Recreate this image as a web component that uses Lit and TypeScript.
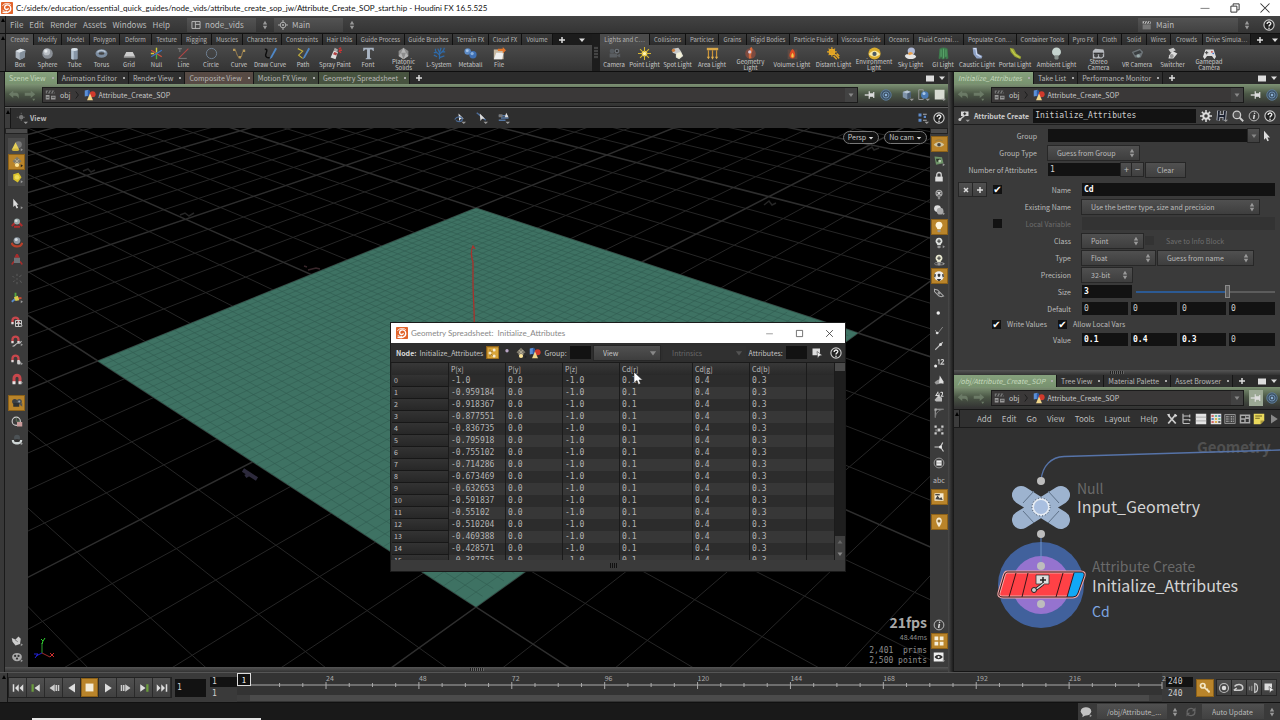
import { LitElement, html, svg, css, nothing } from "lit";
import { customElement } from "lit/decorators.js";
import { classMap } from "lit/directives/class-map.js";

/* ---------- icons (16 x 16 grid) ---------- */
const magnet = (x = 0, y = 0) => svg`<g transform="translate(${x} ${y})"><path d="M2 10V6a4 4 0 0 1 8 0v4" fill="none" stroke="#c8474c" stroke-width="3"/><path d="M.5 8h3v3h-3zM8.500 8h3v3h-3z" fill="#ddd"/></g>`;
const bulb = (fill: string) => svg`<path d="M8 1a4.500 4.500 0 0 1 3 8L10 11H6L5 9A4.500 4.500 0 0 1 8 1z" fill="${fill}"/><path d="M6 12h4v1.500l-1 1.500H7l-1-1.500z" fill="#999"/>`;
const corner = svg`<path d="M13 11l3 2-3 2z" fill="#999"/>`;
const drop = svg`<path d="M10 13h6l-3 3z" fill="#999"/>`;
const I: Record<string, unknown> = {
  swirl: svg`<rect width="16" height="16" rx="1" fill="#e2642b"/><path d="M2 13.500c5 1.500 11 0 11-5 0-3.500-3-5-5.500-4.500C4.500 4.500 4 8 6 9.500c1.500 1 4 .5 3.500-1.500" fill="none" stroke="#fff" stroke-width="1.800"/><path d="M2 5c2-3.500 8-4 11-1.500M2 10.500c1 1.500 3 2.500 6 2" fill="none" stroke="#fff" stroke-width="1.200"/>`,
  min: svg`<path d="M2 8.500h12" stroke="#555"/>`,
  restore: svg`<path d="M2.500 5.500h8v8h-8zM5.500 5V2.500h8v8H11" fill="none" stroke="#333" stroke-width="1.300"/>`,
  max: svg`<path d="M2.500 2.500h11v11h-11z" fill="none" stroke="#444" stroke-width="1.300"/>`,
  close: svg`<path d="M2 2l12 12M14 2L2 14" stroke="#333" stroke-width="1.400"/>`,
  layout: svg`<path d="M1.500 2.500h13v11h-13zM7 2.500v11M7 7h7.500" fill="none" stroke="#bbb" stroke-width="1.500"/>`,
  target: svg`<circle cx="8" cy="8" r="4.500" fill="none" stroke="#bbb" stroke-width="1.400"/><circle cx="8" cy="8" r="1.500" fill="#bbb"/><path d="M8 0v4M8 12v4M0 8h4M12 8h4" stroke="#bbb" stroke-width="1.400"/>`,
  clap: svg`<path d="M1 7h13v8H1z" fill="#777"/><path d="M1 2h13v4H1z" fill="#bbb"/><path d="M3 6l2-4M7 6l2-4M11 6l2-4" stroke="#333" stroke-width="1.500"/>`,
  ud: svg`<path d="M4.500 7L8 1l3.500 6zM4.500 9h7L8 15z" fill="#999"/>`,
  help: svg`<circle cx="8" cy="8" r="6.800" fill="#222" stroke="#ccc" stroke-width="1.500"/><path d="M5.500 6.500C5.500 3 10.700 3.300 10.400 6.300 10.200 8 8 7.800 8 10" fill="none" stroke="#eee" stroke-width="1.800"/><circle cx="8" cy="12.300" r="1.100" fill="#eee"/>`,
  info: svg`<circle cx="8" cy="8" r="6.500" fill="none" stroke="#bbb" stroke-width="1.300"/><path d="M8.500 6.500L7.500 12" stroke="#ddd" stroke-width="2"/><circle cx="8.800" cy="4.300" r="1.100" fill="#ddd"/>`,
  box: svg`<path d="M2 5l6-3 6 2-1 9-6 3-5-3z" fill="#aeb6bf"/><path d="M2 5l5 2 7-3-6-2z" fill="#dfe5ea"/><path d="M7 7l7-3-1 9-6 3z" fill="#84909c"/>`,
  sphere: svg`<circle cx="8" cy="8" r="6.500" fill="#8a8f96"/><circle cx="7" cy="6" r="4.200" fill="#b9bec4"/><circle cx="6" cy="5" r="2" fill="#e6e9ec"/>`,
  tube: svg`<path d="M4 3v11c0 2 8 2 8 0V3z" fill="#8795a5"/><path d="M4 3v11c0 1 2 1.300 3 1.300V3z" fill="#b5c3d1"/><ellipse cx="8" cy="3" rx="4" ry="1.800" fill="#d8e1e9"/>`,
  torus: svg`<ellipse cx="8" cy="8" rx="5.500" ry="3.400" fill="none" stroke="#7c8da0" stroke-width="3.800"/><path d="M3 6.500c2-3 8-3 10 0" fill="none" stroke="#b9c6d4" stroke-width="1.600"/>`,
  grid: svg`<path d="M4 6h8l3 6H1z" fill="#ccc"/><path d="M1 12h14v1.500H1z" fill="#888"/>`,
  nul: svg`<path d="M8 1v14" stroke="#4fae3c" stroke-width="1.600"/><path d="M1.500 4l13 8" stroke="#c9503b" stroke-width="1.600"/><path d="M14.500 4l-13 8" stroke="#3b75c4" stroke-width="1.600"/><path d="M8 1v5M1 8h4" stroke="#d9c63a" stroke-width="1.600"/>`,
  line: svg`<path d="M2 14L14 2" stroke="#b04545" stroke-width="1.300"/><path d="M1 2h5M3.500 2v4" stroke="#777" stroke-width="1.300"/><path d="M2 14h10" stroke="#888"/>`,
  circle: svg`<circle cx="8" cy="8" r="6.300" fill="none" stroke="#6f7f92" stroke-width="1.200"/>`,
  curve: svg`<path d="M1 3c4 0 3 11 8 10 3-1 1-8 5-8" fill="none" stroke="#a08450" stroke-width="1.200"/><path d="M0 2h3v3H0zM7 11h3v3H7zM12 3h3v3h-3z" fill="#b89a5a"/>`,
  draw: svg`<path d="M1 3c5-1 1 5 1 7s2 4 5 3" fill="none" stroke="#0d0d0d" stroke-width="1.800"/><path d="M14 1L8 12l-1 3 3-2 6-11z" fill="#4f87c6"/>`,
  path: svg`<path d="M1 2l6 3-5 5 5 4" fill="none" stroke="#c3b03c" stroke-width="1.400"/><path d="M14 1L8 12l-1 3 3-2 6-11z" fill="#4f87c6"/>`,
  spray: svg`<path d="M6 4l5 2-3 9-6-2z" fill="#ddd"/><path d="M6.500 6l3.500 1.500-1 3L5 9z" fill="#b04040"/><path d="M7 1l4 2-1 3-4-2z" fill="#aaa"/><path d="M12 2l3-1M12 4h4M12 5l3 2" stroke="#cc3333" stroke-width="1.600"/>`,
  font: svg`<path d="M1.500 1h13v4h-1.200c-.3-1.500-1-2-2.300-2H9.800v9.500c0 1 .5 1.300 1.700 1.500v1h-7v-1c1.200-.2 1.700-.5 1.700-1.500V3H5C3.700 3 3 3.500 2.700 5H1.500z" fill="#a9b4c2"/>`,
  plat: svg`<path d="M8 1l6 4v6l-6 4-6-4V5z" fill="#8d8d8d"/><path d="M8 1l3 6H5zM5 7l3 8-6-4zM11 7l3 4-6 4z" fill="#b5b5b5"/>`,
  lsys: svg`<path d="M8 15V7M8 10L3 5M8 9l5-5M8 7L6 2M8 7l2-6M5 7H1M11 6h4M5 12l-4-2M8 13l6-2M3 5V2M13 4l1-3" stroke="#2f6aa8" stroke-width="1.500"/>`,
  meta: svg`<circle cx="4.500" cy="5.500" r="4" fill="#5e8cc6"/><circle cx="11" cy="9.500" r="4.500" fill="#3f70b4"/><circle cx="4" cy="4.500" r="1.800" fill="#a8c6ea"/><circle cx="10" cy="8" r="2" fill="#8ab0de"/>`,
  file: svg`<path d="M1 3h5l1 2h6v10H1z" fill="#c7b9a3"/><path d="M4 7h9l-2 8H1z" fill="#eee"/><path d="M6 2h6V0l4 4-4 4V5H6z" fill="#e2762b"/>`,
  camera: svg`<circle cx="5" cy="5" r="3" fill="#565b60"/><circle cx="11" cy="5" r="3" fill="#6b7076"/><path d="M2 8h9v5H2zM11 10l4-2v5l-4-2z" fill="#5a5e62"/><circle cx="11" cy="5" r="1.200" fill="#222"/>`,
  point: svg`<circle cx="8" cy="8" r="3.500" fill="#f0dc6a"/><path d="M8 0v16M0 8h16M2.500 2.500l11 11M13.500 2.500l-11 11" stroke="#d6b630" stroke-width="1.300"/><circle cx="8" cy="8" r="2" fill="#fff6c0"/>`,
  spot: svg`<path d="M2 2l7-1 3 4-5 4-5-2z" fill="#c9c9c9"/><path d="M6 8l6-3 3 6-5 4-4-2z" fill="#e4e4d6"/><circle cx="10" cy="10" r="3" fill="#f6f2d8"/><circle cx="3" cy="4" r="2" fill="#cc8040"/>`,
  area: svg`<path d="M1 1h14v3H1z" fill="#d8a748"/><path d="M3 4v9M8 4v11M13 4v9" stroke="#cc9438" stroke-width="1.500"/><path d="M1 12h4l-2 3zM6 12h4l-2 3zM11 12h4l-2 3z" fill="#e0b050"/>`,
  geol: svg`<circle cx="8" cy="8" r="6.500" fill="#7d4b40"/><path d="M8 1c4 3-3 6 0 13" stroke="#d66a3c" stroke-width="3" fill="none"/><circle cx="7" cy="6" r="2" fill="#d8c8d8"/>`,
  vol: svg`<path d="M2 3h12v12H2z" fill="#5d4a44"/><path d="M8 2c5 5 4 12 0 12S2 9 8 2z" fill="#dd4b24"/><path d="M8 7c2 3 2 6 0 6s-2-3 0-6z" fill="#f5c74a"/>`,
  dist: svg`<circle cx="6" cy="6" r="4" fill="#f0b52c"/><path d="M6 0v12M0 6h12M2 2l8 8M10 2l-8 8" stroke="#e0a224" stroke-width="1.300"/><path d="M10 9l5 5M8 11l4 4M12 8l3 3" stroke="#e0a224" stroke-width="1.800"/>`,
  env: svg`<circle cx="8" cy="8" r="7.500" fill="#d8ac2e"/><path d="M1 9c4-6 10-6 14 0-4 4-10 4-14 0z" fill="#f7e9a6"/><circle cx="8" cy="8.500" r="2.600" fill="#4a5a66"/>`,
  sky: svg`<circle cx="9" cy="5" r="4.500" fill="#aeb9d6"/><circle cx="8" cy="9" r="3" fill="#e8a04a"/><path d="M1 11c2-3 4-2 6-1 3-2 7-1 8 2-2 4-12 4-14-1z" fill="#e6e6e6"/>`,
  gi: svg`<path d="M3 2c3-2 7-2 10 0l1 12-3 1-1-3-1 3H6l-1-3-1 3-2-1z" fill="#3d7a4c"/><path d="M5 3v9M8 2v12M11 3v9" stroke="#5aa36a" stroke-width="1.200"/>`,
  caus: svg`<path d="M2 1h5l1 7 6 3-1 3H7L3 9z" fill="#8ea1c4"/><path d="M3 2h3l1 7 5 3" stroke="#cfdaf0" stroke-width="1.300" fill="none"/>`,
  port: svg`<path d="M1 1l5 1 3 6 6 4-1 3-7-3-5-6z" fill="#98a234"/><path d="M3 3l4 6 6 4" stroke="#c2cc50" stroke-width="1.500" fill="none"/>`,
  amb: svg`<circle cx="8" cy="6" r="5.500" fill="#c6d4cf"/><path d="M5.500 10h5v4l-1 1.500h-3l-1-1.500z" fill="#87908c"/>`,
  ster: svg`<path d="M1 5l3-3 10 1 1 3v6l-3 2H1z" fill="#b9bcc0"/><path d="M2 7h12v2H2z" fill="#333"/><circle cx="5" cy="10.500" r="2.500" fill="#444"/><circle cx="11" cy="10.500" r="2.500" fill="#444"/>`,
  vr: svg`<path d="M1 6l10-4 4 4-3 7H5z" fill="#6d7478"/><path d="M3 7l8-3 2 3-8 3z" fill="#3a3e40"/><circle cx="9" cy="11" r="2" fill="#9aa"/>`,
  sw: svg`<path d="M3 3l6-2 3 3-6 3z" fill="#ccc"/><path d="M8 5l6 3-5 6H3l1-4z" fill="#ddd"/><circle cx="7" cy="11" r="2.500" fill="#999"/>`,
  pad: svg`<path d="M3 3h10l3 9-2 3-3-4H5l-3 4-2-3z" fill="#ddd"/><path d="M2.500 7h4M4.500 5v4" stroke="#444" stroke-width="1.200"/><circle cx="11" cy="6" r="1" fill="#c33"/><circle cx="12.500" cy="8" r="1" fill="#36c"/>`,
  back: svg`<path d="M1 7l6-5v3h4c3 0 4 3 3 8-1-3-2-4-4-4H7v3z" fill="#6b7a66"/>`,
  fwd: svg`<path d="M15 7L9 2v3H1v4h8v3zM11 13h4l-2 3z" fill="#6b7a66"/>`,
  obj: svg`<path d="M1 2h12v4H1z" fill="#777"/><path d="M3 6l2-4M7 6l2-4M11 6l2-4" stroke="#333" stroke-width="1.500"/><path d="M1 8h5v6H1zM8 9h6v5H8z" fill="#999"/><path d="M2 11h3M9 11h4" stroke="#444" stroke-width="1.500"/>`,
  chev: svg`<path d="M4 0l6 8-6 8" fill="none" stroke="#161616" stroke-width="1.800"/>`,
  geo: svg`<path d="M1 2l5-1v8l-5 1z" fill="#5b8fd6"/><path d="M5 2h3v8H5z" fill="#2c5ca8"/><circle cx="11.500" cy="7" r="4" fill="#d13a2c"/><path d="M8 6l4 9H4z" fill="#f1d68a"/>`,
  tri: svg`<path d="M3 5h10l-5 7z" fill="#888"/>`,
  triup: svg`<path d="M3 11h10L8 4z" fill="#666"/>`,
  triw: svg`<path d="M2 5h12l-6 7z" fill="#ddd"/>`,
  plus: svg`<path d="M8 2v12M2 8h12" stroke="#ddd" stroke-width="3"/>`,
  cross: svg`<path d="M4 4l8 8M12 4l-8 8" stroke="#ddd" stroke-width="3"/>`,
  pane: svg`<path d="M0 3h16v12H0z" fill="#ddd"/>`,
  pin: svg`<path d="M1 8h6" stroke="#ddd" stroke-width="1.800"/><path d="M7 3v10M7 6.500h6v3H7zM13 4v8" stroke="#ddd" stroke-width="1.600" fill="#ddd"/>`,
  link: svg`<circle cx="8" cy="8" r="7" fill="#3e5468" stroke="#5f7d9a" stroke-width="1.200"/><circle cx="8" cy="8" r="4" fill="none" stroke="#7293b4" stroke-width="1.200"/><circle cx="8" cy="8" r="1.600" fill="#8fb2d6"/>`,
  cubed: svg`<path d="M1 4l6-2 5 2v7l-5 3-6-3z" fill="#7f94aa"/><path d="M1 4l6 2 5-2-5-2z" fill="#b8c6d4"/><path d="M7 6l5-2v7l-5 3z" fill="#4c5f75"/>${drop}`,
  snap: svg`<path d="M1 1h6v13H1z" fill="none" stroke="#999" stroke-width="1.300"/><circle cx="9" cy="8" r="5" fill="#4a7ab4"/><circle cx="8" cy="6" r="2" fill="#a8c8e8"/>${drop}`,
  white: svg`<path d="M1 1h13v13H1z" fill="#d8dbd2"/>${drop}`,
  viewt: svg`<path d="M7 1v12M1 7h12" stroke="#666" stroke-width="1.300" stroke-dasharray="2 1"/><circle cx="7" cy="7" r="3" fill="#777"/>${drop}`,
  sel1: svg`<path d="M6 2l7 7H9l-2 3z" fill="#eee"/><path d="M1 10c3-5 10-4 10 0s-8 3-8 1" fill="none" stroke="#4d6d9a" stroke-width="1.600"/>${drop}`,
  sel2: svg`<path d="M1 1l12 10" stroke="#4d6d9a" stroke-width="2"/><path d="M5 2l7 7H8l-2 3z" fill="#ddd"/>${drop}`,
  sel3: svg`<path d="M1 5h12M4 8h10M1 11h9" stroke="#5577a4" stroke-width="2"/><path d="M11 1l3 6h-5z" fill="#ddd"/><path d="M1 3h5v4H1z" fill="#777"/>${drop}`,
  disp: svg`<path d="M2 2h4v4H2zM2 9h4v4H2zM9 5h3v3H9z" fill="#5f8ccc"/><path d="M8 3h5M8 11h5" stroke="#aaa" stroke-width="1.500"/>${drop}`,
  conegs: svg`<circle cx="10" cy="6" r="4.500" fill="#777"/><path d="M6 3l5 10H1z" fill="#e6cf58"/><ellipse cx="6" cy="13" rx="5" ry="1.800" fill="#cdb23c"/>${corner}`,
  diam: svg`<path d="M8 1l6 6-6 5-6-5z" fill="#7f7a6c"/><path d="M5 4l6 6M11 4l-6 6" stroke="#c9c2a8" stroke-width="1"/><circle cx="8" cy="12" r="2.800" fill="#ffe79c"/><path d="M13 11l3 2-3 2z" fill="#222"/>`,
  yel: svg`<path d="M3 3l7-2 4 6-5 7-6-4z" fill="#d9c22c"/><circle cx="8" cy="7" r="3" fill="#eedc58"/>${corner}`,
  arrow: svg`<path d="M4 1l8 9H8.500l2 4-2 1-2-4.500L4 13z" fill="#ddd"/>`,
  arrowc: svg`<path d="M3 1l7 8H7.500l2 4-2 1-2-4.500L3 12z" fill="#ddd"/>${corner}`,
  mv: svg`<path d="M1 12l4-4M15 12l-4-4M4 13h8" stroke="#b02c2c" stroke-width="2.500"/><circle cx="8" cy="6" r="4" fill="#9aa"/><circle cx="7" cy="5" r="1.800" fill="#ddd"/>`,
  rot: svg`<path d="M1 9c1 6 12 7 14 0" fill="none" stroke="#b8402a" stroke-width="3"/><circle cx="8" cy="6" r="4.500" fill="#8c97a2"/><circle cx="7" cy="4.500" r="2" fill="#d6dde2"/>`,
  scl: svg`<path d="M8 0l2 4H6zM1 14l3-4M15 14l-3-4" stroke="#a82c2c" stroke-width="2" fill="#a82c2c"/><path d="M4 5h8v7H4z" fill="#6d7478"/>`,
  dots: svg`<path d="M8 1v3M8 12v3M2 4l2 2M12 10l2 3M3 12l2-2M11 5l3-2M7 8h2" stroke="#5e5e5e" stroke-width="1.300"/>`,
  handle: svg`<path d="M6 1v8" stroke="#54a842" stroke-width="2.500"/><path d="M6 9l8-1" stroke="#c94a32" stroke-width="2.500"/><path d="M6 9l-5 4" stroke="#5a8ac8" stroke-width="2.500"/><path d="M4 7l5-2 2 6-5 1z" fill="#d9cc4c"/>${corner}`,
  mg1: svg`${magnet()}<path d="M6 6h8v8H6zM10 6v8M6 10h8" fill="none" stroke="#ccc" stroke-width="1.300"/>${corner}`,
  mg2: svg`${magnet()}<path d="M2 15c4 0 4-4 7-4s3 0 5-3" fill="none" stroke="#bbb" stroke-width="1.500"/>${corner}`,
  mg3: svg`${magnet()}<circle cx="10.500" cy="11.500" r="2.500" fill="#ccc"/>${corner}`,
  mg4: svg`<path d="M4 13V7a4 4 0 0 1 8 0v6" fill="none" stroke="#c8474c" stroke-width="4"/><path d="M2 11h4v4H2zM10 11h4v4h-4z" fill="#e5e5e5"/>${corner}`,
  cam2: svg`<circle cx="5" cy="6" r="3.500" fill="#3a3f44"/><circle cx="11" cy="6" r="3.500" fill="#4a5056"/><path d="M3 8h8v5H3z" fill="#2c3033"/><path d="M11 10l4-2v5z" fill="#555"/><circle cx="11" cy="6" r="1.400" fill="#9ab"/>`,
  lens: svg`<circle cx="7" cy="7" r="5.500" fill="none" stroke="#ccc" stroke-width="1.500"/><path d="M7 2v5h5" stroke="#6a8a6a" fill="none"/><path d="M8 8h7v6H8z" fill="#c99a9a"/>`,
  robo: svg`<circle cx="8" cy="5" r="4" fill="#4c5256"/><path d="M1 8h14c0 4-3 6-7 6s-7-2-7-6z" fill="#cfd6d6"/><ellipse cx="8" cy="8.500" rx="4" ry="2" fill="#333"/>${corner}`,
  hand: svg`<path d="M1 4l5 2 4-4 3 3-1 7-6 2-4-5z" fill="#ccc"/><path d="M5 6l4 3" stroke="#666"/>${corner}`,
  reel: svg`<ellipse cx="8" cy="8" rx="6.500" ry="5.500" fill="#aaa"/><circle cx="5.500" cy="6.500" r="1.500" fill="#333"/><circle cx="10" cy="6.500" r="1.500" fill="#333"/><circle cx="8" cy="10" r="1.500" fill="#333"/>${corner}`,
  eyeg: svg`<path d="M1 9c4-5 10-5 14 0-4 4-10 4-14 0z" fill="#d2c6a0"/><circle cx="8" cy="9" r="2.400" fill="#444"/><path d="M3 4c3-2 7-2 10 0" stroke="#8a7648" fill="none"/>`,
  grn: svg`<path d="M2 2l10 1 2 8-10 2z" fill="#6e9468"/><path d="M4 5h6l1 4H5z" fill="#2c3a2a"/><circle cx="9" cy="8" r="2" fill="#b8d0b0"/>${corner}`,
  lock: svg`<path d="M5 8V5a3 3 0 0 1 6 0v3" stroke="#ccc" stroke-width="1.800" fill="none"/><path d="M3 7.500h10V14H3z" fill="#ddd"/>`,
  bulbx: svg`<circle cx="8" cy="7" r="4" fill="none" stroke="#aaa" stroke-width="1.500"/><path d="M6 5l4 4M10 5l-4 4" stroke="#ddd" stroke-width="1.500"/><path d="M6.500 12h3v3h-3z" fill="#888"/>`,
  balls: svg`<circle cx="6" cy="6" r="4.500" fill="#ddd"/><circle cx="9.500" cy="9.500" r="4.500" fill="#a8a8a8"/>${corner}`,
  bulb: bulb("#fff6dc"),
  bulbp: svg`${bulb("#dde0dd")}<path d="M8 3v5M5.500 5.500h5" stroke="#333" stroke-width="1.300"/>${corner}`,
  bulbs: svg`${bulb("#e8e8d0")}<path d="M8 3v5M5.500 5.500h5" stroke="#333" stroke-width="1.300"/><ellipse cx="8" cy="13" rx="6" ry="1.800" fill="none" stroke="#999"/>${corner}`,
  ball: svg`<circle cx="8" cy="8" r="6.500" fill="#eee"/><path d="M6 6l2-1.500L10 6l-.7 3H6.700zM2 5l2 1-1 4-1.500-1zM14 5l-2 1 1 4 1.500-1zM5 12h6l-2 2.500H7z" fill="#333"/>`,
  fish: svg`<path d="M2 3l4 1 8 8-3 1-3-1-6-6z" fill="none" stroke="#aaa" stroke-width="1.400"/><circle cx="8" cy="8" r="2" fill="#999"/>`,
  dot: svg`<circle cx="7" cy="8" r="2.300" fill="#eee"/>`,
  tick: svg`<path d="M3 8l3 5 7-9" stroke="#888" stroke-width="1.300" fill="none"/><circle cx="5.500" cy="12" r="1.800" fill="#ddd"/>`,
  diag: svg`<path d="M3 13L13 3" stroke="#bbb" stroke-width="1.500"/><circle cx="10" cy="6" r="2" fill="#ddd"/>`,
  num: svg`<circle cx="3.500" cy="12" r="2" fill="#eee"/><path d="M8 3v7M6.500 4.500L8 3M10.500 4.500c1-2 4-1.500 3.500.5S11 8 10.500 9.500H15" fill="none" stroke="#ccc" stroke-width="1.400"/>`,
  quad: svg`<path d="M2 11l4-3 3-1 1 6-6 1z" fill="#999"/><path d="M9 2l5 8v3l-6-1z" fill="#ddd"/>`,
  quad2: svg`<path d="M2 12l5-6 5 3v5H4z" fill="#bbb"/><path d="M7 1L4 6h5M8 3v6M10 2c3-1 4 1 1 5h3" fill="none" stroke="#ddd" stroke-width="1.400"/>`,
  bez: svg`<path d="M3 14V3h11" fill="none" stroke="#aaa" stroke-width="1.300"/><path d="M3 14C4 8 7 4 14 3" fill="none" stroke="#777" stroke-width="1.300"/><path d="M2 2h3v3H2z" fill="#aaa"/>`,
  chk: svg`<path d="M2 2h3v3H2zM11 2h3v3h-3zM6 6h4v4H6zM2 11h3v3H2zM11 11h3v3h-3z" fill="#ccc"/><path d="M3 7h3v3H3zM10 6h3v3h-3z" fill="#777"/>`,
  norm: svg`<path d="M10 8l3-6M10 8l4 6M10 8H2" stroke="#ccc" stroke-width="1.600"/><circle cx="10" cy="8" r="2" fill="#eee"/>`,
  cube: svg`<circle cx="8" cy="8" r="6.500" fill="none" stroke="#999" stroke-width="1.300"/><path d="M4.500 4.500h7v7h-7z" fill="#eee"/><path d="M4.500 8h7" stroke="#888"/>`,
  img: svg`<path d="M2 3h12v10H2z" fill="#f4ead2"/><path d="M3 11l3-5 3 4 2-2 2 4z" fill="#444"/><path d="M3 5h6" stroke="#222" stroke-width="1.500"/>`,
  pinm: svg`<path d="M8 15C3 9 3 2 8 2s5 7 0 13z" fill="#f5ead0"/><circle cx="8" cy="6.500" r="2" fill="#8a6a30"/>`,
  four: svg`<path d="M2 2h5v5H2zM9 2h5v5H9zM2 9h5v5H2zM9 9h5v5H9z" fill="#f5efdc"/>`,
  eye: svg`<path d="M1 2h13v12H1z" fill="#eee"/><path d="M2 8c3-4 8-4 11 0-3 4-8 4-11 0z" fill="#333"/><circle cx="7.500" cy="8" r="1.500" fill="#eee"/>${corner}`,
  attr: svg`<path d="M4 2h10v6H9l-2 2V8H4z" fill="#d8d8d8"/><path d="M9 3v4M7 5h4" stroke="#222" stroke-width="1.300"/><path d="M2 13l6-5" stroke="#ccc" stroke-width="1.800"/><circle cx="2.500" cy="12.500" r="2" fill="#ccc"/>${drop}`,
  gear: svg`<circle cx="8" cy="8" r="3.700" fill="none" stroke="#ddd" stroke-width="2.600"/><path d="M8 0v4M8 12v4M0 8h4M12 8h4M2.500 2.500l2.500 2.500M11 11l2.500 2.500M13.500 2.500L11 5M5 11l-2.500 2.500" stroke="#ddd" stroke-width="2"/>`,
  hou: svg`<path d="M4 1L3 14M12 1l-1 13M4 8h8" stroke="#c8ccd4" stroke-width="4.600"/><path d="M4 1L3 14M12 1l-1 13M4 8h8" stroke="#1d2230" stroke-width="2.600"/>${drop}`,
  mag: svg`<circle cx="6.500" cy="6.500" r="5" fill="#555" stroke="#ccc" stroke-width="1.700"/><path d="M10 10l5 5" stroke="#ccc" stroke-width="2.400"/>`,
  wrench: svg`<path d="M3 3l10 11M13 2L3 14" stroke="#ccc" stroke-width="2.400"/><path d="M1 2l4-1v4zM11 1l4 2-2 3z" fill="#ddd"/>`,
  tree: svg`<path d="M4 1v13M4 4h9M4 9h9M4 14h9M13 2v4M13 8v3" stroke="#bbb" stroke-width="1.600" fill="none"/>`,
  list: svg`<path d="M1 1h14v14H1z" fill="#e5e5e5"/><path d="M1 5.500h14M1 10.500h14" stroke="#999"/>`,
  pal: svg`<path d="M1 1h14v14H1z" fill="#e5e5e5"/><path d="M2 3h3v2H2zM2 11h3v2H2z" fill="#d04040"/><path d="M6.500 3h3v2h-3zM11 7h3v2h-3z" fill="#4a7"/><path d="M11 3h3v2h-3zM2 7h3v2H2z" fill="#36a"/><path d="M6.500 7h3v2h-3zM6.500 11h3v2h-3z" fill="#d8a020"/><path d="M11 11h3v2h-3z" fill="#444"/>`,
  tbl: svg`<path d="M1 2h14v12H1z" fill="#444" stroke="#aaa"/><path d="M3 5h4M3 8h4M3 11h4M9 5h4M9 8h4M9 11h4" stroke="#ccc" stroke-width="1.600" stroke-dasharray="2 1"/>`,
  tbl2: svg`<path d="M1 2h14v12H1z" fill="#aaa"/><path d="M3 4h5v3H3zM9 8h4v4H9zM3 9h4v3H3z" fill="#333"/><path d="M9 5h4" stroke="#333" stroke-width="1.500"/>`,
  note: svg`<path d="M1 1h14v9l-5 5H1z" fill="#ead95c"/><path d="M10 15v-5h5z" fill="#a8963a"/><path d="M3 4h9M3 7h6" stroke="#6b5f20" stroke-width="1.300"/>`,
  more: svg`<path d="M4 2l9 6-9 6z" fill="#888"/>`,
  first: svg`<path d="M1 3h2v10H1zM9 3v10L4 8zM15 3v10l-5-5z" fill="#ddd"/>`,
  kprev: svg`<path d="M2 3h3v10H2z" fill="#6a9c3c"/><path d="M13 3v10L6 8z" fill="#ddd"/>`,
  sprev: svg`<path d="M9 3v10L2 8zM10 4h2v8h-2zM13 4h2v8h-2z" fill="#ccc"/>`,
  play: svg`<path d="M4 2l9 6-9 6z" fill="#ddd"/>`,
  stop: svg`<path d="M1 1h14v14H1z" fill="#f3ecd8"/>`,
  key: svg`<circle cx="5" cy="5" r="3" fill="none" stroke="#f3e6c4" stroke-width="2.300"/><path d="M7 7l7 7M10 11l2-2M12 13.500l2-2" stroke="#f3e6c4" stroke-width="2.200"/>`,
  ring: svg`<circle cx="8" cy="8" r="6" fill="none" stroke="#bbb" stroke-width="1.600"/><circle cx="8" cy="8" r="3" fill="#ddd"/>`,
  loop: svg`<path d="M2 6c3-4 11-4 11 2 0 3-3 3-4 3M1 11h9M1 11l4-3" fill="none" stroke="#ccc" stroke-width="2"/>`,
  snd: svg`<path d="M2 6v5M5 5v7" stroke="#888" stroke-width="1.800"/><path d="M9 2v12c5-1 5-11 0-12z" fill="none" stroke="#ccc" stroke-width="1.600"/>`,
  opt: svg`<path d="M2 2h10v9H2z" fill="#ddd"/><path d="M8 6l7 5-4 1-2 3z" fill="#eee" stroke="#333" stroke-width=".7"/>`,
  bub: svg`<ellipse cx="8" cy="7" rx="7" ry="5.500" fill="#c2c2c2"/><path d="M4 11l-1 4 5-3z" fill="#c2c2c2"/>${corner}`,
  refr: svg`<path d="M3 9c-1-6 7-8 10-3M13 7c1 6-7 8-10 3" fill="none" stroke="#666" stroke-width="1.800"/><path d="M14 2v5H9zM2 14V9h5z" fill="#666"/>`,
  pts: svg`<path d="M1 1h14v14H1z" fill="#d9a53a"/><path d="M4 8l5-4M4 8l5 5M4 3v10" stroke="#8a6620"/><circle cx="4" cy="8" r="2" fill="#f3ead0"/><circle cx="9.500" cy="4" r="2" fill="#f3ead0"/><circle cx="9.500" cy="12" r="2" fill="#f3ead0"/>`,
  vtx: svg`<circle cx="8" cy="5" r="2.200" fill="#b9a6c6"/>`,
};
const ic = (n: string, c = "") =>
  html`<svg class="ic ${c}" viewBox="0 0 16 16" aria-hidden="true">${I[n] ?? nothing}</svg>`;
const ib = (n: string, c = "") => html`<button type="button" class="ib ${c}" aria-label=${n}>${ic(n)}</button>`;

/* ---------- ground plane projection ---------- */
type P = [number, number];
const quad: P[] = [[98, 361], [476, 208], [858, 333], [476, 607]];
const H = (() => {
  const [[x0, y0], [x1, y1], [x2, y2], [x3, y3]] = quad;
  const dx1 = x1 - x2, dx2 = x3 - x2, sx = x0 - x1 + x2 - x3;
  const dy1 = y1 - y2, dy2 = y3 - y2, sy = y0 - y1 + y2 - y3;
  const d = dx1 * dy2 - dx2 * dy1;
  const g = (sx * dy2 - dx2 * sy) / d, h = (dx1 * sy - sx * dy1) / d;
  return { a: x1 - x0 + g * x1, b: x3 - x0 + h * x3, c: x0, d: y1 - y0 + g * y1, e: y3 - y0 + h * y3, f: y0, g, h };
})();
/* u, v run from -1 to 1 over the green patch */
const proj = (u: number, v: number): [number, number, number] => {
  const s = (u + 1) / 2, t = (v + 1) / 2, w = H.g * s + H.h * t + 1;
  return [(H.a * s + H.b * t + H.c) / w, (H.d * s + H.e * t + H.f) / w, w];
};
const seg = (p: (k: number) => [number, number, number], r: number) => {
  const ks: number[] = [];
  for (let k = -r; k <= r; k += r / 60) if (p(k)[2] > 0.12) ks.push(k);
  if (ks.length < 2) return "";
  const a = p(ks[0]), b = p(ks[ks.length - 1]);
  return `M${a[0].toFixed(1)} ${a[1].toFixed(1)}L${b[0].toFixed(1)} ${b[1].toFixed(1)}`;
};
let fine = "", bold = "", mesh = "";
const R = 8;
for (let i = -R * 5; i <= R * 5; i++) {
  const s = seg((k) => proj(i / 5, k), R) + seg((k) => proj(k, i / 5), R);
  if (i % 5 === 0) bold += s; else fine += s;
}
for (let i = 0; i <= 49; i++) {
  const c = (i / 49) * 2 - 1;
  mesh += seg((k) => proj(c, k), 1) + seg((k) => proj(k, c), 1);
}

/* ---------- data ---------- */
const shelfL = ["Create", "Modify", "Model", "Polygon", "Deform", "Texture", "Rigging", "Muscles", "Characters", "Constraints", "Hair Utils", "Guide Process", "Guide Brushes", "Terrain FX", "Cloud FX", "Volume"];
const shelfR = ["Lights and C…", "Collisions", "Particles", "Grains", "Rigid Bodies", "Particle Fluids", "Viscous Fluids", "Oceans", "Fluid Contai…", "Populate Con…", "Container Tools", "Pyro FX", "Cloth", "Solid", "Wires", "Crowds", "Drive Simula…"];
const toolsL = [["box", "Box"], ["sphere", "Sphere"], ["tube", "Tube"], ["torus", "Torus"], ["grid", "Grid"], ["nul", "Null"], ["line", "Line"], ["circle", "Circle"], ["curve", "Curve"], ["draw", "Draw Curve"], ["path", "Path"], ["spray", "Spray Paint"], ["font", "Font"], ["plat", "Platonic\nSolids"], ["lsys", "L-System"], ["meta", "Metaball"], ["file", "File"]];
const toolsR = [["camera", "Camera"], ["point", "Point Light"], ["spot", "Spot Light"], ["area", "Area Light"], ["geol", "Geometry\nLight"], ["vol", "Volume Light"], ["dist", "Distant Light"], ["env", "Environment\nLight"], ["sky", "Sky Light"], ["gi", "GI Light"], ["caus", "Caustic Light"], ["port", "Portal Light"], ["amb", "Ambient Light"], ["ster", "Stereo\nCamera"], ["vr", "VR Camera"], ["sw", "Switcher"], ["pad", "Gamepad\nCamera"]];
const px = ["-1.0", "-0.959184", "-0.918367", "-0.877551", "-0.836735", "-0.795918", "-0.755102", "-0.714286", "-0.673469", "-0.632653", "-0.591837", "-0.55102", "-0.510204", "-0.469388", "-0.428571", "-0.387755"];
const frame = (f: number) => `${((f - 1) / 239) * 100}%`;

@customElement("app-root")
export class AppRoot extends LitElement {
  static styles = css`
    :host { display: flex; flex-direction: column; height: 100vh; overflow: hidden; position: relative; background: #2b2b2b; color: #bcbcbc;
      font: 7px/12px "Noto Sans CJK SC", "Noto Sans", sans-serif; --mono: "DejaVu Sans Mono", monospace; --orange: #b9842a; }
    * { box-sizing: border-box; }
    button, input, select { font: inherit; color: inherit; margin: 0; padding: 0; border: 0; min-width: 0; border-radius: 0; background: none; outline: 0; }
    select { appearance: none; }
    .ic { width: 12px; height: 12px; display: block; flex: none; }
    .s8 { width: 8px; height: 8px; } .s10 { width: 10px; height: 10px; }
    .row { display: flex; align-items: center; }
    .grow { flex: 1; min-width: 0; }
    .ib { display: grid; place-items: center; flex: none; width: 16px; height: 16px; }
    .on { background: var(--orange); box-shadow: inset 0 0 0 1px #8c6119; }
    .raised { background: linear-gradient(#505050, #404040); box-shadow: 0 0 0 1px #262626; }

    .title { flex: none; height: 16px; background: #fff; color: #111; padding: 0 10px 1px 1px; gap: 3px; font-family: Lato, "Open Sans", sans-serif; font-size: 8px; }
    .title .wins { gap: 19px; }
    .title .ib { width: 11px; height: 12px; }

    .menubar { flex: none; height: 18px; background: linear-gradient(#434343, #343434); border-bottom: 1px solid #111; font-size: 8px; padding-right: 3px; }
    .grip { width: 6px; align-self: stretch; background: #3c3c3c; border-right: 1px solid #151515; flex: none; }
    .grip::after { content: ""; display: block; margin: 2px auto 0; width: 0; border: 2px solid transparent; border-bottom: 4px solid #000; border-top: 0; }
    .menus { gap: 6px; padding: 0 17px 0 4px; }
    .combo { display: flex; align-items: center; }
    .combo .lead { display: flex; align-items: center; gap: 4px; padding-left: 4px; background: linear-gradient(#535353, #424242); height: 14px; }
    .combo .lead select { width: 51px; height: 14px; }
    .combo .lead.wide select { width: 82px; }
    .combo > .ic { margin: 0 4px; }
    .combo.far { margin-right: 5px; }

    .shelf { flex: none; height: 38px; display: grid; grid-template-columns: 6px minmax(0, 586fr) 8px minmax(0, 680fr); background: #3a3a3a; border-bottom: 1px solid #0e0e0e; }
    .set { display: flex; flex-direction: column; min-width: 0; }
    .stabs { display: grid; height: 11px; background: #1c1c1c; font-size: 6px; line-height: 11px; color: #b4b4b4; }
    .sl .stabs { grid-template-columns: 28fr 28fr 28fr 30fr 32fr 30fr 30fr 31fr 39fr 41fr 34fr 48fr 48fr 36fr 33fr 31fr 18fr 21fr; }
    .sr .stabs { grid-template-columns: 50fr 36fr 33fr 28fr 43fr 48fr 47fr 29fr 50fr 53fr 52fr 29fr 24fr 25fr 24fr 32fr 48fr 18fr 11fr; }
    .stab { background: linear-gradient(#3a3a3a, #2c2c2c); border-right: 1px solid #111; white-space: nowrap; text-align: center; height: 11px; line-height: 11px; overflow: hidden; }
    .stab.act { background: #4b4b4b; }
    .stabs .ib { height: 11px; width: 100%; }
    .tools { display: grid; flex: 1; background: linear-gradient(#4a4a4a, #343434); }
    .sl .tools { grid-template-columns: 28fr 27fr 27fr 27fr 28fr 27fr 27fr 28fr 28fr 34fr 32fr 32fr 34fr 37fr 34fr 29fr 28fr 79fr; }
    .sr .tools { grid-template-columns: 28fr 33fr 33fr 36fr 41fr 42fr 41fr 40fr 33fr 32fr 36fr 40fr 43fr 41fr 36fr 35fr 38fr 52fr; }
    .tool { display: flex; flex-direction: column; align-items: center; padding-top: 2px; height: 26px; font-size: 6px; line-height: 6px; color: #c8c8c8; white-space: pre; min-width: 0; }
    .tool .ic { width: 13px; height: 13px; margin-bottom: -1px; }
    .tool span { margin: auto 0; }
    .vgrip { background: repeating-linear-gradient(#222 0 1px, #444 1px 3px); border: solid #1d1d1d; border-width: 12px 2px 12px 2px; }

    .body { flex: 1; min-height: 0; display: grid; grid-template-columns: 5px minmax(0, 943fr) 6px minmax(0, 326fr); }
    .edge { background: #383838; border-right: 1px solid #1a1a1a; }
    .mid { background: linear-gradient(90deg, #4a4a4a, #2a2a2a 60%, #141414); }
    .pane { display: flex; flex-direction: column; min-width: 0; min-height: 0; }
    .ptabs { display: flex; flex: none; height: 12px; background: #2b2b2b; }
    .ptab { height: 12px; line-height: 12px; display: flex; align-items: center; padding: 0 3px 0 4px; gap: 6px; background: #303030; border-right: 1px solid #161616; color: #b8b8b8; white-space: nowrap; flex: none; }
    .ptab::after { content: ""; width: 2px; height: 2px; background: #aaa; }
    .ptab.act { background: linear-gradient(#86a17d, #78926f); color: #c4d8bc; }
    .ptab.it { font-style: italic; }
    .ptab.brown { background: #574a44; } .ptab.olive { background: #3f463b; } .ptab.green { background: #47533f; }
    .ptabs .ib { height: 12px; width: 12px; } .ptabs .plus { width: 18px; }
    .path { flex: none; height: 23px; display: flex; align-items: center; gap: 2px; padding: 0 1px 0 2px; background: linear-gradient(#7d9274, #4b5746 45%, #333 95%); border-bottom: 1px solid #171717; }
    .path .ib { width: 14px; }
    .path .off2 { margin-left: 6px; }
    .crumbs { flex: 1; min-width: 0; height: 16px; display: flex; align-items: center; gap: 3px; margin: 0 3px; background: #3a3838; border: 1px solid #1b1b1b; padding-left: 2px; color: #c8c8c8; }
    .crumbs .chev { width: 7px; height: 14px; }
    .crumbs .dd { margin-left: auto; width: 12px; height: 14px; background: #424242; display: grid; place-items: center; }
    .crumbs a { color: inherit; text-decoration: none; }
    .pinon { background: #9ba894; }

    .vbar { flex: none; height: 21px; display: grid; grid-template-columns: 6px 1fr auto 1fr; align-items: center; background: #2e2e2e; border-top: 1px solid #606060; font-weight: 700; }
    .vbar .row { gap: 2px; padding-left: 5px; } .vbar .c { gap: 6px; } .vbar .r { justify-content: flex-end; gap: 0; padding-right: 1px; }
    .vrow { flex: 1; min-height: 0; display: grid; grid-template-columns: 23px minmax(0, 1fr) 18px; }
    .tb { display: flex; flex-direction: column; align-items: center; background: #3b3b3b; min-height: 0; }
    .tb .col { height: 6px; align-self: stretch; background: #4a4a4a; border: 1px solid #222; flex: none; }
    .tb .ib { width: 17px; height: 16px; }
    .g { display: flex; flex-direction: column; justify-content: space-between; flex: none; }
    .g1 { margin-top: 4px; background: #4a4a4a; } .g2 { height: 110px; margin-top: 10px; } .g3 { height: 73px; margin-top: 8px; } .g4 { height: 53px; margin-top: 8px; }
    .g5 { height: 165px; margin-top: 2px; } .g6 { height: 200px; margin-top: 4px; } .g7 { margin-top: 9px; }
    .last { margin-top: auto; margin-bottom: 2px; }
    .abc { font-size: 7px; width: 17px; line-height: 16px; height: 16px; text-align: center; }
    .view { position: relative; background: #000; min-width: 0; min-height: 0; }
    .view > svg { width: 100%; height: 100%; display: block; }
    .cams { position: absolute; right: 3px; top: 3px; display: flex; gap: 5px; }
    .pill { height: 13px; line-height: 11px; border: 1px solid #777; border-radius: 7px; background: #111; color: #ccc; padding: 0 4px; display: flex; align-items: center; gap: 2px; }
    .pill .ic { width: 6px; height: 6px; }
    .stats { position: absolute; right: 3px; bottom: 1px; text-align: right; font: 8px/10px var(--mono); color: #8f8f8f; white-space: pre; }
    .stats b { display: block; font: 700 14px/18px "Noto Sans CJK SC", sans-serif; color: #a8a8a8; }
    .stats span { display: block; font: 7px/12px "Noto Sans CJK SC", sans-serif; padding-bottom: 3px; }
    .hsplit { flex: none; height: 5px; background: linear-gradient(#555, #333); display: grid; place-items: center; }
    .hsplit::after { content: ""; width: 14px; height: 3px; background: repeating-linear-gradient(90deg, #222 0 1px, #666 1px 2px); }

    .phead { flex: none; height: 18px; display: flex; align-items: center; gap: 4px; padding: 0 4px; background: #3a3a3a; border-bottom: 1px solid #1d1d1d; }
    .phead b { color: #ccc; } .phead input { flex: 1; height: 14px; }
    .phead .ib { width: 12px; }
    .f { background: #121212; height: 13px; line-height: 13px; padding: 0 2px; font-family: var(--mono); font-size: 8px; color: #d0d0d0; border: 0; }
    .f.b { font-weight: 700; color: #fff; }
    .params { flex: 1; min-height: 0; background: #3a3a3a; padding: 2px 5px 0 5px; }
    .pr { display: flex; align-items: center; height: 17px; }
    .pr > .l { width: 78px; text-align: right; margin-right: 11px; white-space: nowrap; flex: none; }
    .pr.n > .l { width: 69px; margin-right: 11px; }
    .pr > .lead { width: 43px; display: flex; align-items: center; justify-content: flex-end; flex: none; }
    .pr .lead .ib { width: 13px; height: 13px; }
    .pr .lead .ib + .ib { margin: 0 7px 0 1px; }
    .pr.gap { margin-top: 3px; }
    .dim { color: #6e6e6e; }
    .info { gap: 12px; padding-left: 2px; }
    .sel { position: relative; display: flex; height: 14px; background: linear-gradient(#505050, #3e3e3e); box-shadow: 0 0 0 1px #272727; }
    .sel select { width: 100%; padding-left: 9px; height: 14px; line-height: 14px; }
    .sel .ic { position: absolute; right: 2px; top: 2px; pointer-events: none; width: 10px; height: 10px; }
    .sel + .sel { margin-left: 3px; }
    .w50 { width: 50px; } .w61 { width: 61px; } .w73 { width: 73px; } .w91 { width: 91px; } .w95 { width: 95px; } .w177 { width: 177px; }
    .btn { height: 14px; width: 39px; margin-left: 3px; }
    .sm { width: 11px; height: 13px; font-size: 9px; }
    .quadf { flex: 1; display: grid; grid-template-columns: repeat(4, minmax(0, 1fr)); gap: 3px; }
    input[type="checkbox"] { appearance: none; width: 9px; height: 9px; background: #121212; display: grid; place-items: center; flex: none; }
    input[type="checkbox"]:checked::before { content: "✔"; font: 10px/9px "DejaVu Sans", sans-serif; color: #fff; }
    input.ghost, input[type="checkbox"].ghost { background: #333; }
    .cks { gap: 6px; padding-left: 33px; height: 14px; } .cks input + label { margin-right: 5px; }
    input[type="range"] { appearance: none; flex: 1; height: 14px; margin-left: 4px; background: linear-gradient(90deg, #2c5a93 66%, #5c5c5c 66%) center / 100% 2px no-repeat; }
    input[type="range"]::-webkit-slider-thumb { appearance: none; width: 5px; height: 13px; background: #5a5a5a; border: 1px solid #8a8a8a; }

    .nmenu { flex: none; height: 18px; display: flex; align-items: center; background: #303030; border-bottom: 1px solid #1a1a1a; gap: 8px; font-size: 8px; }
    .nmenu .set2 { display: flex; gap: 10px; padding-left: 9px; }
    .nmenu .set3 { display: flex; flex: 1; justify-content: space-between; }
    .nmenu .ib { width: 12px; }
    .net { flex: 1; min-height: 0; background: #303030; border-bottom: 1px solid #151515; }
    .net svg { width: 100%; height: 100%; display: block; }
    .parm { flex: none; height: 298px; display: flex; flex-direction: column; min-height: 0; }

    .time { flex: none; height: 31px; display: flex; background: #3a3a3a; border-top: 1px solid #555; border-bottom: 1px solid #111; align-items: center; padding-right: 3px; font-size: 8px; }
    .time .grip { width: 8px; }
    .play { display: grid; grid-template-columns: repeat(9, 18px); margin: 0 4px 0 1px; box-shadow: 0 0 0 1px #222; }
    .play .ib { width: 18px; height: 19px; background: linear-gradient(#505050, #404040); border-right: 1px solid #2a2a2a; }
    .play .ib.on { background: var(--orange); } .play .on .ic { width: 9px; height: 9px; }
    .flip .ic { transform: scaleX(-1); }
    .fr { width: 31px; height: 18px; } .ends { display: grid; gap: 2px; width: 27px; margin-left: 4px; } .ends .f { height: 10px; width: 100%; } .ends .f.p { background: none; }
    .rul { flex: 1; align-self: stretch; min-width: 0; display: flex; flex-direction: column; position: relative; background: #333; }
    .rul svg { width: 100%; flex: 1; min-height: 0; overflow: visible; font-size: 7px; }
    .rul .sb { height: 6px; margin-bottom: 1px; background: #4b4b4b; border: solid #3e3e3e; border-width: 0 13px; flex: none; }
    .cur { position: absolute; left: 0; top: 0; width: 14px; height: 13px; border: 1px solid #ddd; background: #111; text-align: center; line-height: 11px; color: #fff; }
    .kb { width: 18px; height: 18px; margin: 0 3px; }
    .four { display: grid; grid-template-columns: repeat(4, 15px); } .four .ib { width: 14px; height: 15px; }

    .status { flex: none; height: 17px; display: flex; background: #191919; position: relative; }
    .prog { position: absolute; left: 32px; bottom: 0; width: 229px; height: 2px; background: #e6e6e6; }
    .status .r { margin-left: auto; background: #3a3a3a; padding: 0 3px 0 0; gap: 3px; }
    .upd { height: 15px; background: linear-gradient(#505050, #414141); width: 62px; padding-left: 10px; } .upd.wide { width: 70px; }

    .win { position: absolute; left: 391px; top: 323px; width: 454px; height: 248px; background: #2b2b2b; box-shadow: 0 0 0 1px #1a1a1a; display: flex; flex-direction: column; }
    .wt { height: 20px; background: #fff; color: #888; padding: 0 10px 0 5px; gap: 3px; font-family: Lato, "Open Sans", sans-serif; font-size: 8px; flex: none; white-space: pre; }
    .wt .wins { gap: 18px; } .wt .ib { width: 12px; } .wt .wins .ic { width: 9px; height: 9px; }
    .wtb { height: 20px; flex: none; background: #2e2e2e; padding: 0 3px 0 5px; gap: 3px; color: #c4c4c4; border-bottom: 1px solid #1a1a1a; }
    .wtb .ib { width: 13px; height: 13px; } .wtb .btns { gap: 1px; }
    .wtb b { color: #ddd; } .wtb .f { width: 22px; }
    .wtb .sel { width: 69px; } .wtb .sel.off { width: 86px; margin-left: 0; background: #303030; box-shadow: none; } .wtb .sel.off .ic { opacity: 0.4; }
    .wtb .off select { color: #6a6a6a; opacity: 1; }
    .sheet { flex: 1; min-height: 0; overflow: hidden; display: flex; padding-left: 1px; }
    table { border-collapse: separate; border-spacing: 0; table-layout: fixed; height: max-content; flex: 1; min-width: 0; }
    th, td { padding: 0 0 0 2px; height: 12px; line-height: 11px; text-align: left; font-weight: 400; border-right: 1px solid #1b1b1b; white-space: nowrap; overflow: hidden; color: #c0c0c0; }
    thead th { background: linear-gradient(#383838, #292929); }
    tbody th { background: linear-gradient(#333, #272727); border-bottom: 1px solid #171717; }
    tbody td { font: 8px/12px var(--mono); color: #b4b4b4; }
    tbody tr { background: #2c2c2c; } tbody tr:nth-child(even) { background: #373737; }
    .c0, .c1, .c2, .c3, .c5, .c6 { width: 57px; } .c4 { width: 73px; }
    .scr { width: 10px; background: #1e1e1e; display: flex; flex-direction: column; align-items: center; flex: none; }
    .scr .top { height: 8px; align-self: stretch; background: #4a4a4a; margin-bottom: auto; }
    .scr .ib { width: 10px; height: 12px; background: #3f3f3f; }
    .wb { height: 11px; flex: none; background: #3a3a3a; display: grid; grid-template-columns: 20px 1fr 20px; align-items: center; padding-right: 8px; }
    .wb span { grid-column: 2; justify-self: center; width: 8px; height: 5px; background: repeating-linear-gradient(90deg, #111 0 1px, #3a3a3a 1px 2px); }
    .cursor { position: absolute; left: 633px; top: 371px; width: 10px; height: 14px; }
  `;

  private tab(t: string, c = "") { return html`<button class="ptab ${c}">${t}</button>`; }

  private tabTools() {
    return html`<button class="ib plus" aria-label="New tab">${ic("plus", "s8")}</button><span class="grow"></span><button class="ib" aria-label="Pane">${ic("pane", "s8")}</button><button class="ib" aria-label="Pane menu">${ic("triw", "s8")}</button>`;
  }

  private shelfSet(cls: string, tabs: string[], tools: string[][]) {
    return html`<section class="set ${cls}">
      <div class="stabs">${tabs.map((t, i) => html`<button class=${classMap({ stab: true, act: i === 0 })}>${t}</button>`)}
        <button class="ib" aria-label="Add shelf">${ic("plus", "s8")}</button><button class="ib" aria-label="Shelf menu">${ic("triw", "s8")}</button></div>
      <div class="tools">${tools.map(([i, l]) => html`<button class="tool">${ic(i)}<span>${l}</span></button>`)}</div>
    </section>`;
  }

  private path(extra: unknown, pinned = false) {
    return html`<div class="path">${ib("back")}${ib("fwd")}
      <nav class="crumbs">${ic("obj")}<a href="#obj">obj</a>${ic("chev", "chev")}${ic("geo")}<a href="#sop">Attribute_Create_SOP</a><button class="dd" aria-label="Path history">${ic("tri", "s8")}</button></nav>
      ${ib("pin", pinned ? "pinon" : "")}${ib("link")}${extra}</div>`;
  }

  private sel(w: string, v: string, label: string, icon = "ud", off = false) {
    return html`<span class="sel ${w}"><select aria-label=${label} ?disabled=${off}><option>${v}</option></select>${ic(icon)}</span>`;
  }

  private params() {
    return html`<form class="params">
      <div class="pr"><label class="l" for="grp">Group</label><input id="grp" class="f grow"><button type="button" class="ib raised sm" aria-label="Group menu">${ic("tri", "s8")}</button>${ib("arrow")}</div>
      <div class="pr"><span class="l">Group Type</span>${this.sel("w91", "Guess from Group", "Group Type")}</div>
      <div class="pr"><label class="l" for="num">Number of Attributes</label><input id="num" class="f w73" value="1"><button type="button" class="ib raised sm" aria-label="Add">+</button><button type="button" class="ib raised sm" aria-label="Remove">−</button><button type="button" class="raised btn">Clear</button></div>
      <div class="pr n gap"><span class="lead"><button type="button" class="ib raised" aria-label="Delete">${ic("cross", "s8")}</button><button type="button" class="ib raised" aria-label="Insert">${ic("plus", "s8")}</button><input type="checkbox" checked aria-label="Enable"></span><label class="l" for="nm">Name</label><input id="nm" class="f b grow" value="Cd"></div>
      <div class="pr n"><span class="lead"></span><span class="l">Existing Name</span>${this.sel("w177", "Use the better type, size and precision", "Existing Name")}</div>
      <div class="pr n dim"><span class="lead"><input type="checkbox" aria-label="Local variable"></span><span class="l">Local Variable</span><input class="f grow ghost" disabled aria-label="Local Variable name"></div>
      <div class="pr n"><span class="lead"></span><span class="l">Class</span>${this.sel("w61", "Point", "Class")}<label class="row dim info"><input class="ghost" type="checkbox" disabled>Save to Info Block</label></div>
      <div class="pr n"><span class="lead"></span><span class="l">Type</span>${this.sel("w73", "Float", "Type")}${this.sel("w95", "Guess from name", "Type info")}</div>
      <div class="pr n"><span class="lead"></span><span class="l">Precision</span>${this.sel("w50", "32-bit", "Precision")}</div>
      <div class="pr n"><span class="lead"></span><label class="l" for="size">Size</label><input id="size" class="f b w50" value="3"><input type="range" min="1" max="4" value="3" aria-label="Size slider"></div>
      <div class="pr n"><span class="lead"></span><span class="l">Default</span><span class="quadf">${[0, 1, 2, 3].map((i) => html`<input class="f" value="0" aria-label="Default ${i + 1}">`)}</span></div>
      <div class="pr cks"><input id="wv" type="checkbox" checked><label for="wv">Write Values</label><input id="al" type="checkbox" checked><label for="al">Allow Local Vars</label></div>
      <div class="pr n"><span class="lead"></span><span class="l">Value</span><span class="quadf">${["0.1", "0.4", "0.3", "0"].map((v, i) => html`<input class=${classMap({ f: true, b: i < 3 })} value=${v} aria-label="Value ${i + 1}">`)}</span></div>
    </form>`;
  }

  private viewport() {
    return html`<div class="view">
      <svg viewBox="28 128 902 539" preserveAspectRatio="xMidYMid slice">
        <path d=${fine} stroke="#262626" fill="none"/><path d=${bold} stroke="#2e2e2e" stroke-width="1.500" fill="none"/>
        <path d="M${quad.map((p) => p.join(" ")).join("L")}Z" fill="#3e7263"/><path d=${mesh} stroke="#315c51" stroke-width="0.600" fill="none"/>
        <path d="M474 330c1-16-1-30-1-50v-18c-2-6-2-12 0-16l2 3" stroke="#a8322c" stroke-width="1.300" fill="none"/>
        <g fill="none" stroke-width="1.500" stroke="#262626"><path d="M83 171l5-2 3 3 4-2M180 215l5-2 4 3 5-3M764 205l5-4 3 4 4-2M867 150l5-3 2 3 5-2"/><path d="M304 266l3 1M308 270l8-2 4 1" stroke="#38262a"/><path d="M243 470l14 9M246 474l2 3" stroke="#2d2a3c" stroke-width="4"/></g>
        <path d="M42 653v-10" stroke="#2fa02f"/><path d="M42 653l8 4" stroke="#a02a2a"/><path d="M42 653l-6 3" stroke="#2222cc"/>
        <path d="M41 639l2 2 2-3M43 641l-1 3" stroke="#2fd02f" fill="none"/><path d="M50 653l4 4M54 653l-4 4" stroke="#d02f2f"/><path d="M34 654h4l-3 4" stroke="#2222dd" fill="none"/>
      </svg>
      <div class="cams"><button class="pill">Persp ${ic("triw")}</button><button class="pill">No cam ${ic("triw")}</button></div>
      <div class="stats"><b>21fps</b><span>48.44ms</span>2,401  prims
2,500 points</div></div>`;
  }

  private network() {
    const dot = (x: number, y: number) => svg`<circle cx=${x} cy=${y} r="4" fill="#bdbdbd"/>`;
    return html`<div class="net"><svg viewBox="954 428 326 243" preserveAspectRatio="xMidYMid slice">
      <text x="1197" y="453" font-size="15" font-weight="700" fill="#505050">Geometry</text>
      <path d="M1041 481C1042 465 1052 457 1064 456.500L1280 450" fill="none" stroke="#5673a8" stroke-width="1.300"/>
      <path d="M1021 495l40 25M1061 495l-40 25" stroke="#9db3cf" stroke-width="18" stroke-linecap="round"/>
      <path d="M1023 503l11-12M1059 503l-11-12M1023 511l11 12M1059 511l-11 12" stroke="#5e7188" fill="none"/>
      <circle cx="1041" cy="507" r="8" fill="#a9bfe0" stroke="#e6ecf4" stroke-width="2"/><circle cx="1041" cy="507" r="9" fill="none" stroke="#3a4656" stroke-dasharray="1 2"/>
      <path d="M1041 533v40" stroke="#5673a8" stroke-width="1.300"/>
      <circle cx="1041" cy="585" r="43" fill="#41619c"/><circle cx="1041" cy="585" r="29" fill="#9573cf"/><path d="M1041 542v20" stroke="#6f93c8"/>
      ${dot(1041, 481)}${dot(1041, 534)}${dot(1041, 566)}${dot(1041, 604)}
      <path d="M1007 572h74q4 0 3 4l-6 17q-1 4-5 4h-70q-5 0-4-4l5-17q1-4 3-4z" fill="#ff4146" stroke="#f3a8a8" stroke-width="3"/>
      <path d="M1074 572h7q4 0 3 4l-6 17q-1 4-5 4h-6z" fill="#11a8f5"/>
      <path d="M1007 572h74q4 0 3 4l-6 17q-1 4-5 4h-70q-5 0-4-4l5-17q1-4 3-4zM1016 573l-7 24M1028 573l-6 24M1063 573l-7 24M1074 573l-7 24" fill="none" stroke="#3a1517"/>
      <path d="M1036 575h13v9h-5l-3 3v-3h-5z" fill="#ddd" stroke="#333" stroke-width=".8"/><path d="M1043 577v6M1040 580h6" stroke="#222" stroke-width="1.500"/><path d="M1035 590l8-6" stroke="#222" stroke-width="3"/><path d="M1035 590l8-6" stroke="#ddd" stroke-width="1.500"/><circle cx="1034" cy="590" r="2.500" fill="#ccc" stroke="#222"/>
      <g font-size="14" fill="#6a6a6a"><text x="1077" y="494">Null</text><text x="1092" y="572">Attribute Create</text></g>
      <g font-size="16" fill="#d4d4d4"><text x="1077" y="513">Input_Geometry</text><text x="1092" y="592">Initialize_Attributes</text></g>
      <text x="1092" y="617" font-size="14" fill="#7ea6e0">Cd</text></svg></div>`;
  }

  private sheet() {
    return html`<section class="win">
      <header class="wt row">${ic("swirl")}<span class="grow">Geometry Spreadsheet:  Initialize_Attributes</span><span class="wins row">${ib("min")}${ib("max")}${ib("close")}</span></header>
      <div class="wtb row"><b>Node:</b><span>Initialize_Attributes</span><span class="btns row">${ib("pts", "on")}${ib("vtx")}${ib("diam")}${ib("geo")}</span>
        <label for="sg">Group:</label><input id="sg" class="f">${this.sel("", "View", "View", "tri")}${this.sel("off", "Intrinsics", "Intrinsics", "tri", true)}
        <label for="sa">Attributes:</label><input id="sa" class="f">${ib("opt")}<span class="grow"></span>${ib("help")}</div>
      <div class="sheet"><table><colgroup>${[0, 1, 2, 3, 4, 5, 6].map((i) => html`<col class="c${i}">`)}<col></colgroup>
        <thead><tr>${["", "P[x]", "P[y]", "P[z]", "Cd[r]", "Cd[g]", "Cd[b]", ""].map((h) => html`<th>${h}</th>`)}</tr></thead>
        <tbody>${px.map((v, i) => html`<tr><th>${i}</th><td>${v}</td><td>0.0</td><td>-1.0</td><td>0.1</td><td>0.4</td><td>0.3</td><td></td></tr>`)}</tbody></table>
        <div class="scr"><span class="top"></span><button class="ib" aria-label="Scroll up">${ic("triup", "s8")}</button><button class="ib" aria-label="Scroll down">${ic("tri", "s8")}</button></div></div>
      <footer class="wb"><span></span></footer></section>`;
  }

  render() {
    const ticks = Array.from({ length: 39 }, (_, i) => (i + 2) * 6);
    return html`
      <header class="title row">${ic("swirl")}<span class="grow">C:/sidefx/education/essential_quick_guides/node_vids/attribute_create_sop_jw/Attribute_Create_SOP_start.hip - Houdini FX 16.5.525</span>
        <span class="wins row">${ib("min")}${ib("restore")}${ib("close")}</span></header>
      <div class="menubar row"><span class="grip"></span>
        <nav class="menus row">${["File", "Edit", "Render", "Assets", "Windows", "Help"].map((m) => html`<button>${m}</button>`)}</nav>
        <span class="combo"><span class="lead">${ic("layout", "s10")}<select aria-label="Desktop"><option>node_vids</option></select></span>${ic("ud", "s10")}</span>
        <span class="combo"><span class="lead">${ic("target", "s10")}<select aria-label="Take"><option>Main</option></select></span>${ic("ud", "s10")}</span>
        <span class="grow"></span>
        <span class="combo far"><span class="lead wide">${ic("clap", "s10")}<select aria-label="Radial menu"><option>Main</option></select></span>${ic("ud", "s10")}</span>${ib("help")}</div>
      <div class="shelf"><span class="grip"></span>${this.shelfSet("sl", shelfL, toolsL)}<span class="vgrip"></span>${this.shelfSet("sr", shelfR, toolsR)}</div>
      <main class="body"><span class="edge"></span>
        <section class="pane">
          <div class="ptabs">${this.tab("Scene View", "act")}${this.tab("Animation Editor")}${this.tab("Render View")}${this.tab("Composite View", "brown")}${this.tab("Motion FX View", "olive")}${this.tab("Geometry Spreadsheet", "green")}${this.tabTools()}</div>
          ${this.path(html`${ib("cubed", "off2")}${ib("snap")}${ib("white")}`)}
          <div class="vbar"><span class="grip"></span><span class="row">${ic("viewt")}View</span><span class="row c">${ib("sel1")}${ib("sel2")}${ib("sel3")}</span><span class="row r">${ib("disp")}${ib("help")}</span></div>
          <div class="vrow">
            <div class="tb"><span class="col"></span><div class="g g1">${ib("conegs")}${ib("diam", "on")}${ib("yel")}</div>
              <div class="g g2">${["arrowc", "mv", "rot", "scl", "dots", "handle"].map((n) => ib(n))}</div>
              <div class="g g3">${["mg1", "mg2", "mg3", "mg4"].map((n) => ib(n))}</div>
              <div class="g g4">${ib("cam2", "on")}${ib("lens")}${ib("robo")}</div><div class="g last">${ib("hand")}${ib("reel")}</div></div>
            ${this.viewport()}
            <div class="tb"><span class="col"></span><div class="g g5">${ib("eyeg", "on")}${["grn", "lock", "bulbx", "balls"].map((n) => ib(n))}${ib("bulb", "on")}${ib("bulbp")}${ib("bulbs")}${ib("ball", "on")}${ib("fish")}</div>
              <div class="g g6">${["dot", "tick", "diag", "num", "quad", "quad2", "bez", "chk", "norm", "cube"].map((n) => ib(n))}<button class="abc">abc</button>${ib("img", "on")}</div>
              <div class="g g7">${ib("pinm", "on")}</div><div class="g last">${ib("info")}${ib("four", "on")}${ib("eye")}</div></div>
          </div>
          <div class="hsplit"></div>
        </section>
        <span class="mid"></span>
        <section class="pane">
          <div class="parm">
            <div class="ptabs">${this.tab("Initialize_Attributes", "act it")}${this.tab("Take List")}${this.tab("Performance Monitor")}${this.tabTools()}</div>
            ${this.path(nothing)}
            <div class="phead">${ic("attr")}<b>Attribute Create</b><input class="f" aria-label="Node name" value="Initialize_Attributes">${["gear", "hou", "mag", "info", "help"].map((n) => ib(n))}</div>
            ${this.params()}
          </div>
          <div class="hsplit"></div>
          <div class="ptabs">${this.tab("/obj/Attribute_Create_SOP", "act it")}${this.tab("Tree View")}${this.tab("Material Palette")}${this.tab("Asset Browser")}${this.tabTools()}</div>
          ${this.path(nothing, true)}
          <div class="nmenu"><span class="grip"></span><nav class="set2">${["Add", "Edit", "Go", "View", "Tools", "Layout", "Help"].map((m) => html`<button>${m}</button>`)}</nav><span class="set3">${["wrench", "tree", "list", "pal", "tbl", "tbl2", "note", "more"].map((n) => ib(n))}</span></div>
          ${this.network()}
        </section>
      </main>
      <div class="time"><span class="grip"></span>
        <div class="play">${ib("first")}${ib("kprev")}${ib("sprev")}${ib("play", "flip")}${ib("stop", "on")}${ib("play")}${ib("sprev", "flip")}${ib("kprev", "flip")}${ib("first", "flip")}</div>
        <input class="f fr" value="1" aria-label="Current frame"><div class="ends"><input class="f" value="1" aria-label="Start"><input class="f p" value="1" aria-label="Range start"></div>
        <div class="rul"><svg><line x1="0" x2="100%" y1="12" y2="12" stroke="#aaa"/>
          ${ticks.map((f) => svg`<line x1=${frame(f)} x2=${frame(f)} y1=${f % 24 ? 10 : 9} y2=${f % 24 ? 14 : 16} stroke="#aaa"/>${f % 24 === 0 ? svg`<text x=${frame(f)} y="8" fill="#aaa">${f < 240 ? f : "2"}</text>` : nothing}`)}</svg>
          <span class="sb"></span><span class="cur">1</span></div>
        <div class="ends"><input class="f" value="240" aria-label="End"><input class="f p" value="240" aria-label="Range end"></div>
        ${ib("key", "on kb")}<div class="four">${["ring", "loop", "snd", "opt"].map((n) => ib(n, "raised"))}</div></div>
      <footer class="status"><span class="prog"></span><div class="r row">${ib("bub")}<select class="upd wide" aria-label="Context"><option>/obj/Attribute_...</option></select>${ic("ud", "s10")}${ib("refr")}<select class="upd" aria-label="Update mode"><option>Auto Update</option></select>${ic("ud", "s10")}</div></footer>
      ${this.sheet()}
      <svg class="cursor" viewBox="0 0 10 14"><path d="M1 1v11l3-2.500 1.500 4 2-1L6 9h3.500z" fill="#fff" stroke="#222" stroke-width=".5"/></svg>`;
  }
}
